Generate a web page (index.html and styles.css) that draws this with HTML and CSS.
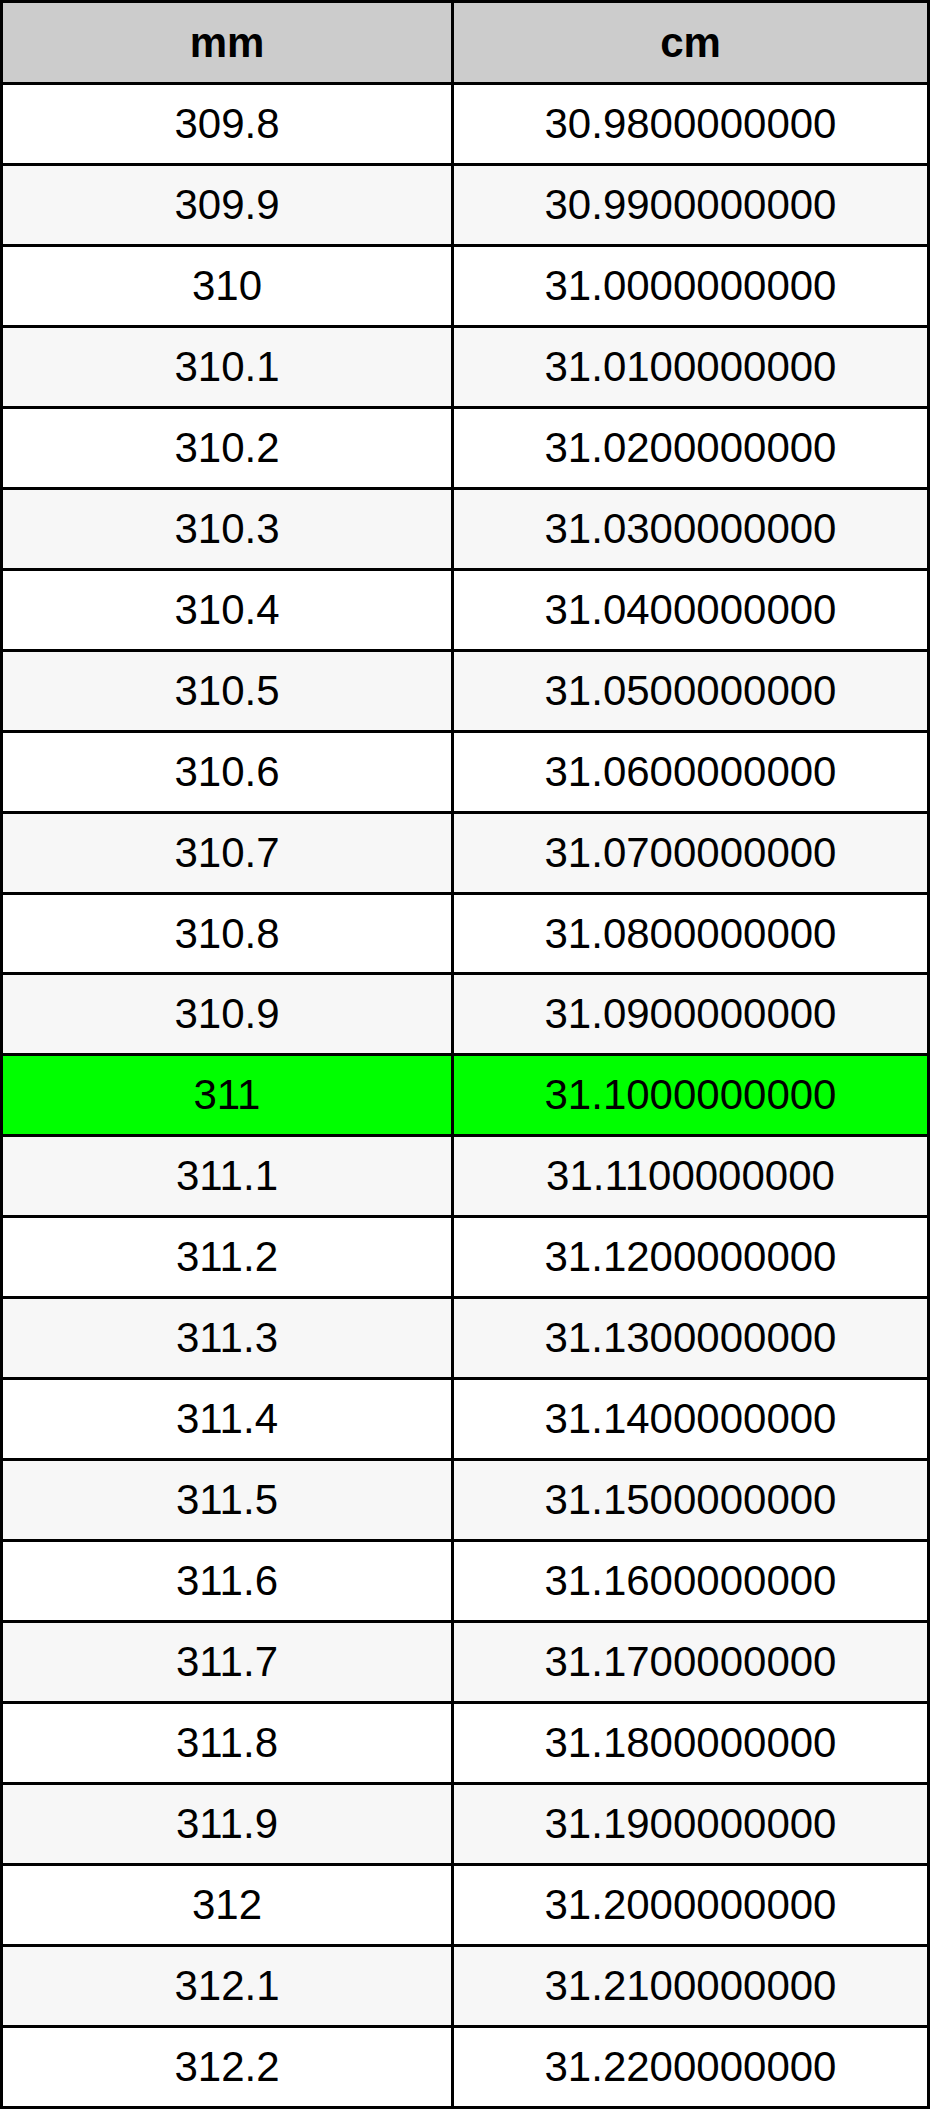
FILE: index.html
```html
<!DOCTYPE html>
<html>
<head>
<meta charset="utf-8">
<link rel="stylesheet" href="styles.css">
</head>
<body>
<div class="table">
  <div class="cell head">mm</div><div class="cell head">cm</div>
  <div class="cell">309.8</div><div class="cell">30.9800000000</div>
  <div class="cell alt">309.9</div><div class="cell alt">30.9900000000</div>
  <div class="cell">310</div><div class="cell">31.0000000000</div>
  <div class="cell alt">310.1</div><div class="cell alt">31.0100000000</div>
  <div class="cell">310.2</div><div class="cell">31.0200000000</div>
  <div class="cell alt">310.3</div><div class="cell alt">31.0300000000</div>
  <div class="cell">310.4</div><div class="cell">31.0400000000</div>
  <div class="cell alt">310.5</div><div class="cell alt">31.0500000000</div>
  <div class="cell">310.6</div><div class="cell">31.0600000000</div>
  <div class="cell alt">310.7</div><div class="cell alt">31.0700000000</div>
  <div class="cell">310.8</div><div class="cell">31.0800000000</div>
  <div class="cell alt">310.9</div><div class="cell alt">31.0900000000</div>
  <div class="cell hl">311</div><div class="cell hl">31.1000000000</div>
  <div class="cell alt">311.1</div><div class="cell alt">31.1100000000</div>
  <div class="cell">311.2</div><div class="cell">31.1200000000</div>
  <div class="cell alt">311.3</div><div class="cell alt">31.1300000000</div>
  <div class="cell">311.4</div><div class="cell">31.1400000000</div>
  <div class="cell alt">311.5</div><div class="cell alt">31.1500000000</div>
  <div class="cell">311.6</div><div class="cell">31.1600000000</div>
  <div class="cell alt">311.7</div><div class="cell alt">31.1700000000</div>
  <div class="cell">311.8</div><div class="cell">31.1800000000</div>
  <div class="cell alt">311.9</div><div class="cell alt">31.1900000000</div>
  <div class="cell">312</div><div class="cell">31.2000000000</div>
  <div class="cell alt">312.1</div><div class="cell alt">31.2100000000</div>
  <div class="cell">312.2</div><div class="cell">31.2200000000</div>
</div>
</body>
</html>
```

FILE: styles.css
```css
html, body {
  margin: 0;
  padding: 0;
  background: #ffffff;
}

.table {
  width: 930px;
  box-sizing: border-box;
  display: grid;
  grid-template-columns: 448px 473px;
  grid-template-rows: 79px;
  grid-auto-rows: 77.96px;
  gap: 3px;
  padding: 3px;
  background: #000000;
}

.cell {
  background: #ffffff;
  display: flex;
  align-items: center;
  justify-content: center;
  font-family: "Liberation Sans", Arial, sans-serif;
  font-size: 42px;
  color: #000000;
}

.cell.alt {
  background: #f7f7f7;
}

.cell.hl {
  background: #00ff00;
}

.cell.head {
  background: #cccccc;
  font-weight: bold;
}
```
